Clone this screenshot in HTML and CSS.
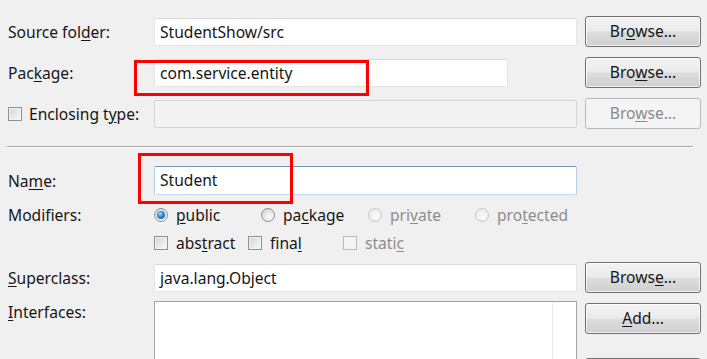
FILE: index.html
```html
<!DOCTYPE html>
<html>
<head>
<meta charset="utf-8">
<link rel="stylesheet" href="styles.css">
</head>
<body>
<div class="dialog">
  <div class="form">
    <div class="row">
      <label class="lbl">Source fol<u>d</u>er:</label>
      <div class="field">StudentShow/src</div>
      <div class="btn">Br<u>o</u>wse...</div>
    </div>
    <div class="row gap10">
      <label class="lbl">Pac<u>k</u>age:</label>
      <div class="field short">com.service.entity</div>
      <div class="btn">Bro<u>w</u>se...</div>
    </div>
    <div class="row gap10">
      <label class="lbl check-lbl"><span class="cbox"></span><span>Enclosing t<u>y</u>pe:</span></label>
      <div class="field disabled"></div>
      <div class="btn disabled">Bro<u>w</u>se...</div>
    </div>
    <div class="sep"></div>
    <div class="row name-row">
      <label class="lbl">Na<u>m</u>e:</label>
      <div class="field focus">Student</div>
    </div>
    <div class="row small mt9">
      <label class="lbl">Modifiers:</label>
      <div class="opts">
        <span class="opt r"><span class="radio on"></span><span><u>p</u>ublic</span></span>
        <span class="opt r"><span class="radio"></span><span>pa<u>c</u>kage</span></span>
        <span class="opt r off"><span class="radio dis"></span><span>pri<u>v</u>ate</span></span>
        <span class="opt r off"><span class="radio dis"></span><span>pro<u>t</u>ected</span></span>
      </div>
    </div>
    <div class="row small mt8">
      <span></span>
      <div class="opts">
        <span class="opt c1"><span class="cbox"></span><span>abs<u>t</u>ract</span></span>
        <span class="opt c2"><span class="cbox"></span><span>fina<u>l</u></span></span>
        <span class="opt off"><span class="cbox dis"></span><span>stati<u>c</u></span></span>
      </div>
    </div>
    <div class="row mt9">
      <label class="lbl"><u>S</u>uperclass:</label>
      <div class="field">java.lang.Object</div>
      <div class="btn">Brows<u>e</u>...</div>
    </div>
    <div class="row list-row">
      <label class="lbl"><u>I</u>nterfaces:</label>
      <div class="list"><div class="col"></div></div>
      <div class="btns">
        <div class="btn"><u>A</u>dd...</div>
        <div class="btn second"></div>
      </div>
    </div>
  </div>
  <div class="mark mark-pkg"></div>
  <div class="mark mark-name"></div>
</div>
</body>
</html>
```
FILE: styles.css
```css
html, body {
  margin: 0;
  padding: 0;
  height: 359px;
  overflow: hidden;
  background: #f0f0f0;
}
body {
  font-family: "Noto Sans", "Open Sans", sans-serif;
  font-size: 15.6px;
  color: #161616;
}
u {
  text-decoration: underline;
  text-underline-offset: 2px;
  text-decoration-thickness: 1px;
}
.dialog {
  position: relative;
  height: 359px;
  overflow: hidden;
}
.form {
  display: flex;
  flex-direction: column;
  padding: 16px 0 0 8px;
}
.row {
  display: grid;
  grid-template-columns: 138px 423px 116px;
  column-gap: 8px;
  align-items: center;
  height: 31px;
}
.row.small { height: 20px; }
.gap10 { margin-top: 10px; }
.mt9 { margin-top: 9px; }
.mt8 { margin-top: 8px; }
.lbl {
  white-space: nowrap;
  line-height: 20px;
}
.check-lbl {
  display: flex;
  align-items: center;
  gap: 7px;
}
.field {
  box-sizing: border-box;
  height: 28px;
  background: #fff;
  border: 1px solid #e4e4e4;
  border-top-color: #dadada;
  border-radius: 2px;
  padding: 0 5px;
  line-height: 26px;
  white-space: nowrap;
}
.field.short { width: 354px; }
.field.disabled {
  background: #f3f3f3;
  border-color: #d4d4d4;
}
.field.focus {
  height: 29px;
  line-height: 27px;
  border-color: #7393b3 #b6cfe7 #c4d9ee #b6cfe7;
}
.btn {
  box-sizing: border-box;
  height: 31px;
  border: 1px solid #707070;
  border-radius: 3px;
  background: linear-gradient(#f3f3f3 0%, #ebebeb 48%, #dddddd 52%, #cfcfcf 100%);
  box-shadow: inset 0 0 0 1px rgba(255,255,255,0.75);
  text-align: center;
  line-height: 28px;
  color: #161616;
}
.btn.disabled {
  border-color: #b5b9bc;
  background: #f4f4f4;
  box-shadow: none;
  color: #8a8a8a;
}
.sep {
  margin: 17px 0 17px -1px;
  width: 686px;
  border-top: 1px solid #a7a7a7;
  border-bottom: 1px solid #ffffff;
}
.opts {
  display: flex;
  align-items: center;
  grid-column: 2 / 4;
  white-space: nowrap;
}
.opt {
  display: flex;
  align-items: center;
  gap: 8px;
  line-height: 20px;
}
.opt.r { width: 107px; }
.opt.c1 { width: 94px; }
.opt.c2 { width: 95px; }
.opt.off { color: #8d8d8d; }
.cbox {
  display: inline-block;
  box-sizing: border-box;
  width: 14px;
  height: 14px;
  flex: none;
  border: 1px solid #8e8f8f;
  background: linear-gradient(135deg, #cfd2d6 0%, #e8e9ea 55%, #f8f8f8 100%);
  box-shadow: inset 0 0 0 1px #f4f4f4;
}
.cbox.dis {
  border-color: #b9b9b9;
  background: #f4f4f4;
  box-shadow: none;
}
.radio {
  position: relative;
  display: inline-block;
  box-sizing: border-box;
  width: 14px;
  height: 14px;
  flex: none;
  border-radius: 50%;
  border: 1px solid #8f9092;
  background: radial-gradient(circle at 60% 65%, #fafafa 0%, #e4e4e4 55%, #c9c9c9 100%);
}
.radio.on::after {
  content: "";
  position: absolute;
  left: 2px;
  top: 2px;
  width: 8px;
  height: 8px;
  border-radius: 50%;
  background: radial-gradient(circle at 40% 35%, #a9dcfb 0%, #2f86d0 45%, #17508f 100%);
}
.radio.dis {
  border-color: #c8c8c8;
  background: radial-gradient(circle at 60% 65%, #fbfbfb 0%, #eeeeee 60%, #e2e2e2 100%);
}
.list-row {
  margin-top: 8px;
  height: 58px;
  overflow: hidden;
  align-items: start;
}
.list-row .lbl { padding-top: 1px; }
.list {
  box-sizing: border-box;
  height: 100px;
  background: #fff;
  border: 1px solid #a3a3a3;
}
.list .col {
  width: 397px;
  height: 100%;
  border-right: 1px solid #e5ebf1;
}
.btns {
  display: flex;
  flex-direction: column;
  padding-top: 2px;
}
.btn.second { margin-top: 24px; }
.mark {
  position: absolute;
  box-sizing: border-box;
  border: 3.5px solid #ff0000;
}
.mark-pkg {
  left: 134px;
  top: 60px;
  width: 235px;
  height: 36px;
}
.mark-name {
  left: 138px;
  top: 153px;
  width: 155px;
  height: 51px;
}
```
